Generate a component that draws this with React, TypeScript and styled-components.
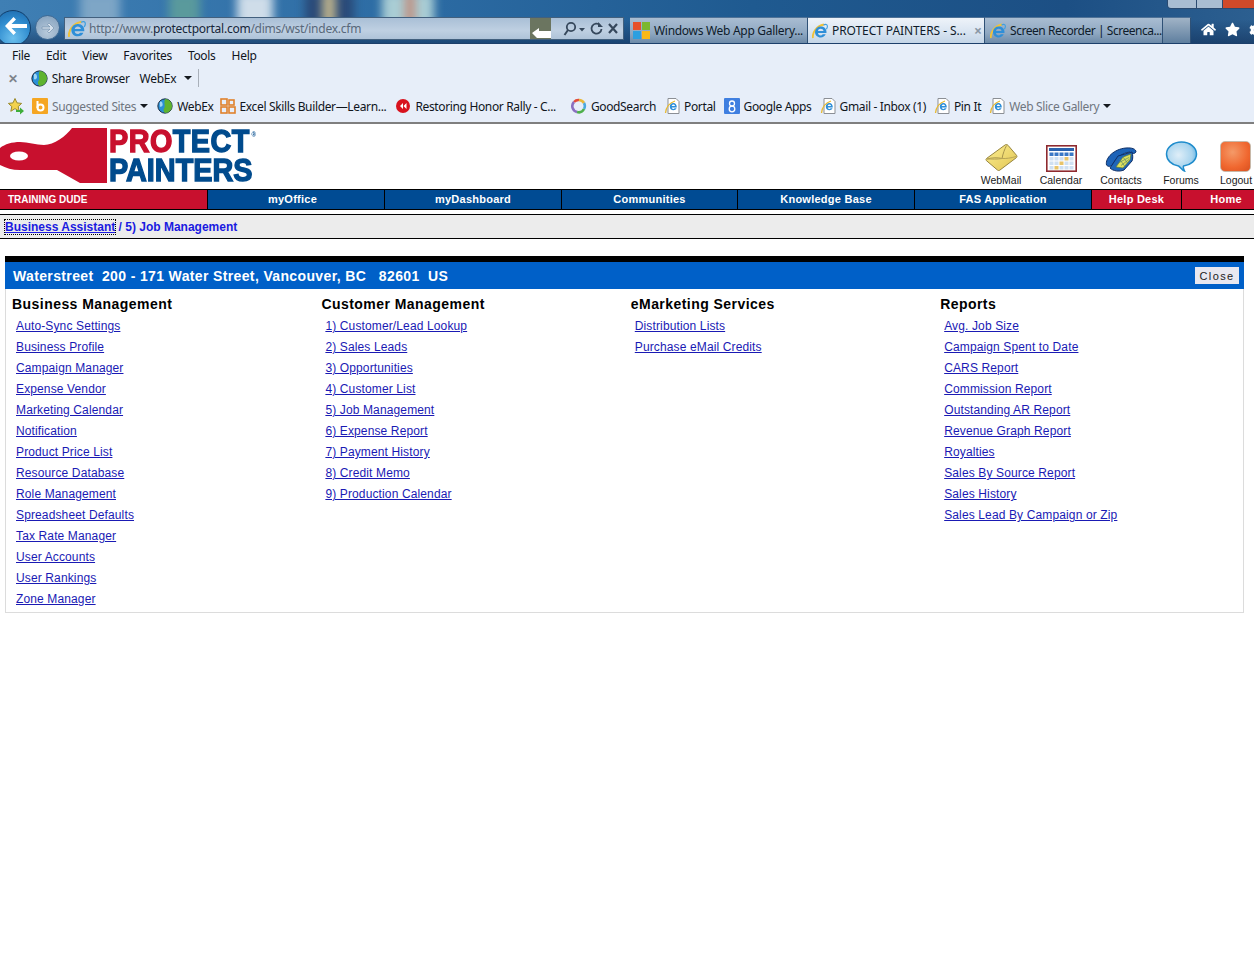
import React from "react";
import styled, { createGlobalStyle } from "styled-components";
import { FaCog, FaHome, FaStar } from "react-icons/fa";

const GlobalStyle = createGlobalStyle`
  html, body {
    margin: 0;
    padding: 0;
    background: #fff;
  }
  body {
    font-family: "Liberation Sans", Arial, sans-serif;
    overflow: hidden;
  }
  #root {
    width: 1254px;
    height: 974px;
    overflow: hidden;
  }
`;

const chromeFont = `"Noto Sans", "Open Sans", sans-serif`;

/* ---------- browser chrome ---------- */

const TitleBar = styled.div`
  position: relative;
  height: 44px;
  overflow: hidden;
  border-bottom: 1px solid #1c3f6b;
  box-sizing: border-box;
  background:
    linear-gradient(rgba(20, 50, 90, 0) 45%, rgba(16, 44, 84, 0.55) 100%),
    linear-gradient(90deg, #3f7fb4 0%, #2b6aa2 35%, #1f5a90 60%, #1c4f84 85%, #2c5f90 100%);
`;

const Blob = styled.div<{ $x: number; $w: number; $c: string }>`
  position: absolute;
  top: -8px;
  left: ${({ $x }) => $x}px;
  width: ${({ $w }) => $w}px;
  height: 36px;
  background: ${({ $c }) => $c};
  filter: blur(5px);
`;

const BackButton = styled.div`
  position: absolute;
  left: -5px;
  top: 10px;
  width: 36px;
  height: 36px;
  border-radius: 50%;
  background: radial-gradient(circle at 50% 80%, #6cc0ee 0%, #2f8ccf 55%, #1c66a8 100%);
  border: 1px solid #123f6c;
  box-sizing: border-box;
  display: flex;
  align-items: center;
  justify-content: center;
  padding-left: 5px;
  padding-bottom: 4px;
`;

const ForwardButton = styled.div`
  position: absolute;
  left: 35px;
  top: 15px;
  width: 25px;
  height: 25px;
  border-radius: 50%;
  background: radial-gradient(circle at 50% 70%, #b8cadb 0%, #7f9dbb 100%);
  border: 1px solid #3f6a94;
  box-sizing: border-box;
  display: flex;
  align-items: center;
  justify-content: center;
`;

const AddressBar = styled.div`
  position: absolute;
  left: 64px;
  top: 17px;
  width: 560px;
  height: 23px;
  box-sizing: border-box;
  display: flex;
  align-items: center;
  padding: 0 1px 0 3px;
  background: linear-gradient(#a9bfd6, #bfd0e2 60%, #aec3d8);
  border: 1px solid #42607e;
  font: 12px ${chromeFont};
  color: #58687a;
  letter-spacing: -0.25px;
`;

const Url = styled.span`
  margin-left: 3px;
  flex: 1;
  white-space: nowrap;
  & b {
    font-weight: 400;
    color: #16263a;
  }
`;

const TabStrip = styled.div`
  position: absolute;
  left: 630px;
  top: 17px;
  display: flex;
  height: 26px;
`;

const Tab = styled.div<{ $active?: boolean; $w: number; $ls: number; $pad: number }>`
  width: ${({ $w }) => $w}px;
  box-sizing: border-box;
  display: flex;
  align-items: center;
  gap: 4px;
  padding: 0 0 0 ${({ $pad }) => $pad}px;
  font: 12px ${chromeFont};
  letter-spacing: ${({ $ls }) => $ls}px;
  white-space: nowrap;
  overflow: hidden;
  color: #0e1b2a;
  border-right: 1px solid #2f5176;
  border-top: 1px solid #4f7297;
  background: ${({ $active }) =>
    $active
      ? "linear-gradient(#eef3f9, #dbe6f2 50%, #c4d5e7)"
      : "linear-gradient(#a9bdd2, #8fa8c2 60%, #6d8aa8)"};
  & > svg {
    flex-shrink: 0;
  }
`;

const TabClose = styled.span`
  margin-left: 4px;
  color: #8a97a6;
  font-size: 14px;
  font-weight: 700;
`;

const EmptyTab = styled.div`
  width: 27px;
  background: linear-gradient(#a0b3c6, #5f7f9f);
  border-top: 1px solid #4f7297;
  border-right: 1px solid #2f5176;
`;

const RightTools = styled.div`
  position: absolute;
  left: 1201px;
  top: 22px;
  display: flex;
  gap: 9px;
  color: #fff;
  align-items: center;
`;

const WindowButtons = styled.div`
  position: absolute;
  left: 1167px;
  top: -9px;
  display: flex;
  height: 16px;
  border: 1px solid #2a4a70;
  border-radius: 4px;
  overflow: hidden;
`;

const WinBtn = styled.div<{ $w: number; $c: string }>`
  width: ${({ $w }) => $w}px;
  background: ${({ $c }) => $c};
  border-right: 1px solid #2a4a70;
`;

const MenuArea = styled.div`
  height: 78px;
  background: #e7eef9;
  border-bottom: 2px solid #7f7f7f;
  font: 12px ${chromeFont};
  color: #10151c;
  letter-spacing: -0.3px;
`;

const MenuRow = styled.div`
  height: 22px;
  padding-bottom: 2px;
  display: flex;
  align-items: center;
  gap: 16px;
  padding-left: 12px;
`;

const CommandRow = styled.div`
  height: 20px;
  padding-bottom: 2px;
  display: flex;
  align-items: center;
  padding-left: 8px;
`;

const FavRow = styled.div`
  height: 28px;
  padding-top: 2px;
  display: flex;
  align-items: center;
  padding-left: 7px;
  white-space: nowrap;
  letter-spacing: -0.35px;
`;

const FavItem = styled.span<{ $gap?: number; $muted?: boolean }>`
  display: inline-flex;
  align-items: center;
  gap: 4px;
  margin-right: ${({ $gap }) => $gap ?? 8}px;
  color: ${({ $muted }) => ($muted ? "#6f7680" : "inherit")};
`;

const CloseMark = styled.span`
  color: #7d838b;
  font-weight: 700;
  font-size: 12px;
`;

const Caret = styled.span<{ $space?: number }>`
  display: inline-block;
  width: 0;
  height: 0;
  border-left: 4px solid transparent;
  border-right: 4px solid transparent;
  border-top: 4px solid #15191f;
  margin-left: ${({ $space }) => $space ?? 0}px;
`;

const CmdDivider = styled.span`
  width: 1px;
  height: 18px;
  background: #a9b0ba;
  margin-left: 6px;
`;

const IeIcon = ({ size = 16 }: { size?: number }) => (
  <svg width={size} height={size} viewBox="0 0 16 16">
    <path d="M1 15C0 10 4 3 12 1.500" fill="none" stroke="#f0c23a" strokeWidth="1.800" />
    <path
      d="M9 3.500a5.500 5.500 0 0 0-6 5.500c0 3.200 2.500 5.500 5.700 5.500 2.400 0 4.200-1.200 5-3.200h-3c-.5.800-1.200 1.200-2.100 1.200-1.400 0-2.500-1-2.600-2.500H14.500C14.800 6 12.500 3.500 9 3.500ZM6 8c.2-1.400 1.300-2.300 2.700-2.300S11.300 6.600 11.500 8Z"
      fill="#2f8fd8"
    />
    <path d="M11.500 2c2-1 4-.8 3.900 1.500 0 1-.6 2-1 2.700" fill="none" stroke="#3f9fe0" strokeWidth="1.100" />
  </svg>
);

const PageIe = () => (
  <svg width="16" height="16" viewBox="0 0 16 16">
    <path d="M4 .500h8l3 3V15.500H4Z" fill="#fff" stroke="#8b8f95" />
    <path
      d="M9.500 5a3.700 3.700 0 0 0-3.700 3.800c0 2 1.500 3.500 3.600 3.500 1.500 0 2.600-.7 3.200-2h-2c-.3.400-.7.600-1.200.6-.8 0-1.500-.6-1.600-1.500h5c.2-2.500-1.500-4.400-3.300-4.400Zm-1.700 3c.1-.8.800-1.400 1.600-1.400s1.500.6 1.600 1.400Z"
      fill="#2f8fd8"
    />
    <path d="M1.500 15C2 10 5 5 11 3" fill="none" stroke="#e8b92f" strokeWidth="1.300" />
  </svg>
);

const Globe = ({ size = 17 }: { size?: number }) => (
  <svg width={size} height={size} viewBox="0 0 17 17">
    <circle cx="8.500" cy="8.500" r="7.600" fill="#2a8fd6" stroke="#12233a" />
    <path d="M8.500 1a7.500 7.500 0 0 1 0 15c-2-2-2-4-.5-6 1-2-1-4 .5-9Z" fill="#5fb32f" />
    <path d="M3 4c2-1 3 1 3 3s-2 3-3 2Z" fill="#9fd6f5" />
  </svg>
);

const StarAdd = () => (
  <svg width="18" height="18" viewBox="0 0 18 18">
    <path
      d="M8 1.500l2 4.400 4.600.5-3.400 3.200 1 4.700L8 11.600l-4.200 2.700 1-4.700L1.400 6.400 6 5.900Z"
      fill="#f3d24c"
      stroke="#9a8a2b"
    />
    <path d="M9 13h4v-2.500l4 3.500-4 3.500V15H9Z" fill="#3fae3a" />
  </svg>
);

const BingIcon = () => (
  <svg width="16" height="16" viewBox="0 0 16 16">
    <rect width="16" height="16" fill="#f5a623" rx="1" />
    <circle cx="8.500" cy="9.500" r="3" fill="none" stroke="#fff" strokeWidth="2" />
    <path d="M5.500 3v7" stroke="#fff" strokeWidth="2" />
  </svg>
);

const OfficeIcon = () => (
  <svg width="16" height="16" viewBox="0 0 16 16">
    <g fill="none" stroke="#e0812b" strokeWidth="1.600">
      <rect x="1" y="1" width="6" height="6" />
      <rect x="9" y="2" width="5" height="5" />
      <rect x="1" y="9" width="6" height="6" />
      <rect x="9" y="9" width="6" height="6" />
    </g>
  </svg>
);

const RedBadge = () => (
  <svg width="16" height="16" viewBox="0 0 16 16">
    <circle cx="8" cy="8" r="7" fill="#d8121e" />
    <path d="M8 5 5 8l3 3ZM11.500 5l-3 3 3 3Z" fill="#fff" />
  </svg>
);

const RingIcon = () => (
  <svg width="16" height="16" viewBox="0 0 16 16">
    <g fill="none" strokeWidth="2.600">
      <path d="M3 4a6 6 0 0 1 5-2" stroke="#e34b3a" />
      <path d="M8 2a6 6 0 0 1 5 3" stroke="#e8b83a" />
      <path d="M13 5a6 6 0 0 1 0 6" stroke="#4aa8de" />
      <path d="M13 11a6 6 0 0 1-7 3" stroke="#4fb04b" />
      <path d="M6 14a6 6 0 0 1-3-10" stroke="#8a6fc0" />
    </g>
  </svg>
);

const GoogleIcon = () => (
  <svg width="16" height="16" viewBox="0 0 16 16">
    <rect width="16" height="16" fill="#3f7fe0" rx="1" />
    <circle cx="8" cy="5.500" r="2.500" fill="none" stroke="#fff" strokeWidth="1.300" />
    <circle cx="8" cy="11" r="2.800" fill="none" stroke="#fff" strokeWidth="1.300" />
  </svg>
);

const WindowsIcon = () => (
  <svg width="17" height="17" viewBox="0 0 16 16">
    <rect width="7.500" height="7.500" fill="#e8502a" />
    <rect x="8.500" width="7.500" height="7.500" fill="#7cb82f" />
    <rect y="8.500" width="7.500" height="7.500" fill="#2c9fe0" />
    <rect x="8.500" y="8.500" width="7.500" height="7.500" fill="#fab818" />
  </svg>
);

/* ---------- logo and quick icons ---------- */

const Header = styled.div`
  height: 63px;
  display: flex;
  justify-content: space-between;
  background: #fff;
`;

const Logo = styled.div`
  display: flex;
  align-items: flex-start;
`;

const LogoWords = styled.div`
  margin-left: 2px;
  padding-top: 3px;
  font-weight: 700;
  font-size: 32px;
  line-height: 29px;
  -webkit-text-stroke: 1.400px currentColor;
  transform: scaleX(0.9);
  transform-origin: left top;
`;

const LogoLine = styled.div<{ $ls: number }>`
  display: flex;
  letter-spacing: ${({ $ls }) => $ls}px;
  white-space: nowrap;
  color: #004b8d;
  height: 29px;
`;

const LogoRed = styled.span`
  color: #c8102e;
`;

const LogoReg = styled.sup`
  font-size: 7px;
  line-height: 7px;
  -webkit-text-stroke: 0;
  margin: 4px 0 0 2px;
`;

const QuickLinks = styled.div`
  display: flex;
  padding-top: 15px;
`;

const Quick = styled.div<{ $w: number; $end?: boolean }>`
  width: ${({ $w }) => $w}px;
  display: flex;
  flex-direction: column;
  align-items: ${({ $end }) => ($end ? "flex-start" : "center")};
  justify-content: flex-end;
  gap: 2px;
  height: 47px;
  font-size: 10.500px;
  color: #1a1a1a;
  white-space: nowrap;
  padding-left: ${({ $end }) => ($end ? "9px" : "0")};
  box-sizing: border-box;
`;

const Envelope = () => (
  <svg width="33" height="29" viewBox="0 0 33 29">
    <defs>
      <linearGradient id="env" x1="0" y1="0" x2="1" y2="1">
        <stop offset="0" stopColor="#fbee92" />
        <stop offset="1" stopColor="#e2c552" />
      </linearGradient>
    </defs>
    <path
      d="M1.500 15.500 20 2c1-.7 2-.7 3 .3l8.500 10c.7 1 .6 1.800-.3 2.500L15 27c-1 .8-2 .6-2.800-.2L1.300 17.500c-.5-.7-.4-1.400.2-2Z"
      fill="url(#env)"
      stroke="#97853f"
      strokeLinejoin="round"
    />
    <path d="M2 16c5-1.500 11-1.500 15-.5 1-5 2.500-9 4.500-13" fill="none" stroke="#a8954c" />
    <path d="M2 16c5 0 10 .5 15-.5 4 .2 9-.4 14-2" fill="none" stroke="#b8a556" />
  </svg>
);

const CalendarIcon = () => (
  <svg width="31" height="27" viewBox="0 0 31 27">
    <rect x="0.800" y="0.800" width="29.400" height="25.400" fill="#fff" stroke="#8e2a2f" strokeWidth="1.600" />
    <rect x="3" y="3" width="25" height="3" fill="#2a62ad" />
    {[0, 1, 2, 3].map((r) =>
      [0, 1, 2, 3, 4].map((c) => (
        <rect
          key={`${r}-${c}`}
          x={3.5 + c * 5}
          y={7.5 + r * 4.5}
          width="4"
          height="3.500"
          fill={r === 0 ? "#3a78c6" : (r + c) % 4 === 0 ? "#e8c46a" : "#cfe0f2"}
        />
      )),
    )}
  </svg>
);

const PhoneIcon = () => (
  <svg width="32" height="25" viewBox="0 0 32 25">
    <path d="M1.500 18C0 11 9 2 21 1c6-.5 10 1 10 4-2 2.500-5 1.500-6 0C17 6 11 11 8 17c-2 3-5 3-6.500 1Z" fill="#1d63b8" stroke="#0e2f66" />
    <path d="M5 21 13 9l14-4c1 3 1 7 0 9l-8 9c-5 2-11 1-14-2Z" fill="#1f66b8" stroke="#0e2f66" />
    <path d="M11 20l7-10 8-3-1 6-7 8Z" fill="#dfe05c" stroke="#5c7a3c" strokeWidth="0.700" />
    <path d="M14 15.500l10-5M16 18.500l8-6M14.500 12l5 7M18 10l4.500 6" stroke="#5a8a6a" strokeWidth="0.700" />
  </svg>
);

const BubbleIcon = () => (
  <svg width="33" height="31" viewBox="0 0 33 31">
    <defs>
      <radialGradient id="bubble" cx="40%" cy="45%" r="65%">
        <stop offset="0" stopColor="#dfeef8" />
        <stop offset="0.7" stopColor="#a8d4ee" />
        <stop offset="1" stopColor="#5fb2e2" />
      </radialGradient>
    </defs>
    <path
      d="M16.500 1C8 1 1.500 6.500 1.500 13c0 6 5 11 12 12 2 1 3 4 6 5-1-2-1.500-4-1-5 7-1 13-5.500 13-12C31.500 6.500 25 1 16.500 1Z"
      fill="url(#bubble)"
      stroke="#1f8ccc"
      strokeWidth="1.500"
    />
  </svg>
);

const LogoutIcon = styled.div`
  width: 31px;
  height: 31px;
  border-radius: 5px;
  background: radial-gradient(circle at 40% 35%, #f49a68 0%, #f0672f 60%, #d9501f 100%);
  border: 1px solid #c8b8a8;
  box-sizing: border-box;
`;

/* ---------- nav + breadcrumb ---------- */

const Nav = styled.nav`
  display: grid;
  grid-template-columns: 207px 176px 176px 175px 176px 176px 89px 1fr;
  column-gap: 1px;
  height: 21px;
  box-sizing: border-box;
  background: #000;
  border-top: 1px solid #000;
  border-bottom: 1px solid #000;
  margin-top: 2px;
`;

const NavItem = styled.div<{ $red?: boolean; $left?: boolean; $offset?: number }>`
  background: ${({ $red }) => ($red ? "#c8102e" : "#004b93")};
  color: #fff;
  font-size: ${({ $left }) => ($left ? "10px" : "11px")};
  font-weight: 700;
  letter-spacing: ${({ $left }) => ($left ? "0" : "0.25px")};
  line-height: 19px;
  text-align: ${({ $left }) => ($left ? "left" : "center")};
  padding-left: ${({ $left, $offset }) => ($left ? "8px" : `${Math.max($offset ?? 0, 0)}px`)};
  padding-right: ${({ $offset }) => `${Math.max(-($offset ?? 0), 0)}px`};
`;

const Crumbs = styled.div`
  margin-top: 4px;
  height: 25px;
  box-sizing: border-box;
  background: #ececec;
  border-top: 1px solid #000;
  border-bottom: 1px solid #000;
  padding: 1px 0 0 5px;
  font-size: 12px;
  font-weight: 700;
  line-height: 23px;
  color: #1a1ae0;
`;

const CrumbLink = styled.a`
  color: #1a1ae0;
  text-decoration: underline;
  outline: 1px dotted #000;
`;

/* ---------- location panel ---------- */

const Panel = styled.section`
  margin: 17px 10px 0 5px;
  border-top: 6px solid #000;
`;

const PanelHead = styled.div`
  height: 27px;
  background: #0060c8;
  display: flex;
  align-items: center;
  justify-content: space-between;
  padding: 0 5px 0 8px;
  color: #fff;
  font-size: 14px;
  font-weight: 700;
  letter-spacing: 0.36px;
  white-space: pre;
`;

const CloseBtn = styled.button`
  width: 44px;
  height: 17px;
  padding: 0;
  border: none;
  background: #e8e8f0;
  color: #222;
  font: 11px "Liberation Sans", sans-serif;
  letter-spacing: 1.400px;
`;

const PanelBody = styled.div`
  display: grid;
  grid-template-columns: repeat(4, 309.400px);
  height: 324px;
  padding: 6px 0 0 6px;
  box-sizing: border-box;
  border: 1px solid #dcdcdc;
  border-top: none;
`;

const ColTitle = styled.h3`
  margin: 0 0 3px;
  font-size: 14px;
  line-height: 18px;
  font-weight: 700;
  letter-spacing: 0.45px;
  color: #000;
`;

const LinkList = styled.ul`
  list-style: none;
  margin: 0;
  padding: 0 0 0 4px;
`;

const LinkRow = styled.li`
  height: 21px;
  line-height: 21px;
  font-size: 12px;
  letter-spacing: 0.13px;
`;

const MenuLink = styled.a`
  color: #1a1ab4;
  text-decoration: underline;
`;

const columns: { title: string; links: string[] }[] = [
  {
    title: "Business Management",
    links: [
      "Auto-Sync Settings",
      "Business Profile",
      "Campaign Manager",
      "Expense Vendor",
      "Marketing Calendar",
      "Notification",
      "Product Price List",
      "Resource Database",
      "Role Management",
      "Spreadsheet Defaults",
      "Tax Rate Manager",
      "User Accounts",
      "User Rankings",
      "Zone Manager",
    ],
  },
  {
    title: "Customer Management",
    links: [
      "1) Customer/Lead Lookup",
      "2) Sales Leads",
      "3) Opportunities",
      "4) Customer List",
      "5) Job Management",
      "6) Expense Report",
      "7) Payment History",
      "8) Credit Memo",
      "9) Production Calendar",
    ],
  },
  {
    title: "eMarketing Services",
    links: ["Distribution Lists", "Purchase eMail Credits"],
  },
  {
    title: "Reports",
    links: [
      "Avg. Job Size",
      "Campaign Spent to Date",
      "CARS Report",
      "Commission Report",
      "Outstanding AR Report",
      "Revenue Graph Report",
      "Royalties",
      "Sales By Source Report",
      "Sales History",
      "Sales Lead By Campaign or Zip",
    ],
  },
];

const navItems = ["myOffice", "myDashboard", "Communities", "Knowledge Base", "FAS Application"];

export default function App() {
  return (
    <>
      <GlobalStyle />
      <TitleBar>
        <Blob $x={80} $w={40} $c="#7ea6c6" />
        <Blob $x={169} $w={31} $c="#5a9a9c" />
        <Blob $x={237} $w={36} $c="#cfdde9" />
        <Blob $x={305} $w={49} $c="#2a4a78" />
        <Blob $x={322} $w={14} $c="#b9b08c" />
        <Blob $x={382} $w={52} $c="#a9cdd4" />
        <Blob $x={405} $w={10} $c="#c08f80" />
        <BackButton>
          <svg width="24" height="18" viewBox="0 0 24 18">
            <path d="M9.500 0 1 9l8.500 9 2.500-2.500L7.500 11H23V7H7.500L12 2.500Z" fill="#fff" />
          </svg>
        </BackButton>
        <ForwardButton>
          <svg width="14" height="12" viewBox="0 0 14 12">
            <path d="M8 1l5 5-5 5-1.500-1.500L9 7H1V5h8L6.500 2.500Z" fill="#d4e0ec" stroke="#5c7c9c" strokeWidth="0.500" />
          </svg>
        </ForwardButton>
        <AddressBar>
          <IeIcon size={18} />
          <Url>
            http://www.<b>protectportal.com</b>/dims/wst/index.cfm
          </Url>
          <svg width="21" height="21" viewBox="0 0 21 21" style={{ flexShrink: 0 }}>
            <rect x="0" y="0" width="21" height="21" fill="#6b7560" />
            <path d="M21 13H9v-3l-7 5 5 5h14Z" fill="#fff" />
          </svg>
          <svg width="60" height="18" viewBox="0 0 60 18" style={{ marginLeft: 11, flexShrink: 0 }}>
            <circle cx="9" cy="7" r="4.200" fill="none" stroke="#36485c" strokeWidth="1.800" />
            <path d="M6 10 2.500 15" stroke="#36485c" strokeWidth="2" />
            <path d="M17 8h6l-3 3.500Z" fill="#36485c" />
            <path d="M38 5a5 5 0 1 0 1.500 4" fill="none" stroke="#36485c" strokeWidth="1.800" />
            <path d="M36 2v5h5Z" fill="#36485c" />
            <path d="M47 4l8 9M55 4l-8 9" stroke="#36485c" strokeWidth="2.200" />
          </svg>
        </AddressBar>
        <TabStrip>
          <Tab $w={178} $ls={-0.3} $pad={3}>
            <WindowsIcon />
            Windows Web App Gallery...
          </Tab>
          <Tab $w={177} $ls={-0.08} $pad={4} $active>
            <IeIcon />
            PROTECT PAINTERS - S...
            <TabClose>×</TabClose>
          </Tab>
          <Tab $w={178} $ls={-0.46} $pad={5}>
            <IeIcon />
            Screen Recorder | Screenca...
          </Tab>
          <EmptyTab />
        </TabStrip>
        <WindowButtons>
          <WinBtn $w={28} $c="#a9bdd2" />
          <WinBtn $w={25} $c="#a9bdd2" />
          <WinBtn $w={34} $c="#d04a2a" />
        </WindowButtons>
        <RightTools>
          <FaHome size={15} />
          <FaStar size={15} />
          <FaCog size={14} />
        </RightTools>
      </TitleBar>
      <MenuArea>
        <MenuRow>
          <span>File</span>
          <span>Edit</span>
          <span>View</span>
          <span>Favorites</span>
          <span>Tools</span>
          <span>Help</span>
        </MenuRow>
        <CommandRow>
          <FavItem $gap={13}>
            <CloseMark>✕</CloseMark>
          </FavItem>
          <FavItem $gap={10}>
            <Globe />
            Share Browser
          </FavItem>
          <FavItem $gap={0}>
            WebEx <Caret $space={4} />
          </FavItem>
          <CmdDivider />
        </CommandRow>
        <FavRow>
          <FavItem $gap={7}>
            <StarAdd />
          </FavItem>
          <FavItem $gap={9} $muted>
            <BingIcon />
            Suggested Sites <Caret />
          </FavItem>
          <FavItem $gap={6}>
            <Globe size={16} />
            WebEx
          </FavItem>
          <FavItem $gap={9}>
            <OfficeIcon />
            Excel Skills Builder—Learn...
          </FavItem>
          <FavItem $gap={15}>
            <RedBadge />
            Restoring Honor Rally - C...
          </FavItem>
          <FavItem>
            <RingIcon />
            GoodSearch
          </FavItem>
          <FavItem>
            <PageIe />
            Portal
          </FavItem>
          <FavItem>
            <GoogleIcon />
            Google Apps
          </FavItem>
          <FavItem>
            <PageIe />
            Gmail - Inbox (1)
          </FavItem>
          <FavItem>
            <PageIe />
            Pin It
          </FavItem>
          <FavItem $muted>
            <PageIe />
            Web Slice Gallery <Caret />
          </FavItem>
        </FavRow>
      </MenuArea>

      <Header>
        <Logo>
          <svg width="107" height="60" viewBox="0 0 107 60">
            <path
              d="M107 4H72C66 12 54 21 44 21 36 21 28 18 20 18 12 18 5 20 0 24V41C6 44 12 46 20 46 32 46 44 46 57 46L80 59H107Z"
              fill="#c8102e"
            />
            <ellipse cx="19" cy="32" rx="9" ry="4.500" fill="#fff" />
          </svg>
          <LogoWords>
            <LogoLine $ls={0.5}>
              <LogoRed>PRO</LogoRed>TECT<LogoReg>®</LogoReg>
            </LogoLine>
            <LogoLine $ls={0}>PAINTERS</LogoLine>
          </LogoWords>
        </Logo>
        <QuickLinks>
          <Quick $w={60}>
            <Envelope />
            WebMail
          </Quick>
          <Quick $w={60}>
            <CalendarIcon />
            Calendar
          </Quick>
          <Quick $w={60}>
            <PhoneIcon />
            Contacts
          </Quick>
          <Quick $w={60}>
            <BubbleIcon />
            Forums
          </Quick>
          <Quick $w={43} $end>
            <LogoutIcon />
            Logout
          </Quick>
        </QuickLinks>
      </Header>

      <Nav>
        <NavItem $red $left>
          TRAINING DUDE
        </NavItem>
        {navItems.map((n, i) => (
          <NavItem key={n} $offset={i === 0 ? -7 : 0}>
            {n}
          </NavItem>
        ))}
        <NavItem $red>Help Desk</NavItem>
        <NavItem $red $offset={16}>
          Home
        </NavItem>
      </Nav>

      <Crumbs>
        <CrumbLink>Business Assistant</CrumbLink> / 5) Job Management
      </Crumbs>

      <Panel>
        <PanelHead>
          <span>{"Waterstreet  200 - 171 Water Street, Vancouver, BC   82601  US"}</span>
          <CloseBtn>Close</CloseBtn>
        </PanelHead>
        <PanelBody>
          {columns.map((col) => (
            <div key={col.title}>
              <ColTitle>{col.title}</ColTitle>
              <LinkList>
                {col.links.map((l) => (
                  <LinkRow key={l}>
                    <MenuLink>{l}</MenuLink>
                  </LinkRow>
                ))}
              </LinkList>
            </div>
          ))}
        </PanelBody>
      </Panel>
    </>
  );
}
